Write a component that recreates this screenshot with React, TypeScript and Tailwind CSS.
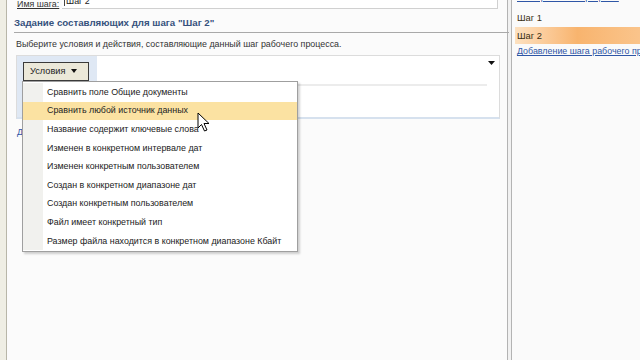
import React from 'react';

const items = [
  'Сравнить поле Общие документы',
  'Сравнить любой источник данных',
  'Название содержит ключевые слова',
  'Изменен в конкретном интервале дат',
  'Изменен конкретным пользователем',
  'Создан в конкретном диапазоне дат',
  'Создан конкретным пользователем',
  'Файл имеет конкретный тип',
  'Размер файла находится в конкретном диапазоне Кбайт',
];

function Cursor() {
  return (
    <svg width="14" height="21" viewBox="0 0 14 21" className="absolute left-[190px] top-[112px]">
      <path d="M1 1 L1 16 L4.5 12.5 L7.5 19 L10 18 L7 11.5 L12 11.5 Z" fill="#fff" stroke="#000" strokeWidth="1" strokeLinejoin="round" />
    </svg>
  );
}

function ConditionsMenu() {
  return (
    <div className="absolute left-[15px] top-[81px] w-[276px] border border-[#9f9f9f] bg-white py-px shadow-[2px_2px_2px_rgba(0,0,0,0.18)]">
      {items.map((label, i) => (
        <div
          key={label}
          className={`flex h-[18.6px] items-center whitespace-nowrap ${i === 1 ? 'bg-[#fbe2a2]' : ''}`}
        >
          <div className={`h-full w-[20px] ${i === 1 ? '' : 'bg-[#f1f1ee]'}`} />
          <span className="pl-[4px] text-[#222]">{label}</span>
        </div>
      ))}
    </div>
  );
}

export default function App() {
  return (
    <div
      className="relative flex h-[360px] w-[640px] overflow-hidden bg-[#fafafa] text-[8.9px] leading-none"
      style={{ fontFamily: '"Liberation Sans", Arial, sans-serif' }}
    >
      {/* left frame strip */}
      <div className="w-[7px] shrink-0 border-r border-[#b8b6a8] bg-[#efeee4]" />

      {/* main area */}
      <div className="relative w-[500px] shrink-0 bg-[#fbfbfb]">
        <div className="mt-[-6px] flex items-end whitespace-nowrap">
          <span className="ml-[10px] w-[45px] text-[#333] underline">Имя шага:</span>
          <div className="h-[15px] w-[436px] border-b border-r border-[#d0d0d0] bg-white pl-[2px] pt-[3px] text-[#222]">
            <span className="border-l border-[#444] pl-px">Шаг 2</span>
          </div>
        </div>

        <div className="ml-[7px] mr-[-2px] mt-[9px] border-b border-[#a9a9a9] pb-[4px] text-[9.7px] font-bold text-[#35517d]">
          Задание составляющих для шага "Шаг 2"
        </div>

        <div className="ml-[9px] mt-[7px] text-[#333]">
          Выберите условия и действия, составляющие данный шаг рабочего процесса.
        </div>

        <div className="ml-[9px] mt-[6px] flex h-[64px] w-[484px] border border-b-2 border-[#dcdcdc] border-b-[#d6e1ee]">
          <div className="w-[80px] bg-[#dfe8f4] pl-[6px] pt-[6px]">
            <div className="flex h-[19px] w-[66px] items-center gap-[6px] border border-[#3a3a3a] bg-[#ebe8d9] pl-[6px] text-[9.2px] text-[#222]">
              Условия
              <svg width="6" height="4" viewBox="0 0 6 4">
                <path d="M0 0 H6 L3 4 Z" fill="#111" />
              </svg>
            </div>
          </div>
          <div className="flex flex-1 flex-col bg-white">
            <div className="flex justify-end pr-[4px] pt-[5px]">
              <svg width="7" height="4" viewBox="0 0 7 4">
                <path d="M0 0 H7 L3.5 4 Z" fill="#111" />
              </svg>
            </div>
            <div className="ml-[8px] mr-[12px] mt-[19px] h-[2px] bg-[#ececec]" />
          </div>
        </div>

        <div className="ml-[10px] mt-[9px] text-[#2e56a6] underline">Добавить ветвь «Иначе если»</div>

        <ConditionsMenu />
        <Cursor />
      </div>

      {/* splitter */}
      <div className="w-[5px] shrink-0 border-x border-[#b3b3b3] bg-[#f1f1f1]" />

      {/* right panel */}
      <div className="min-w-0 flex-1 overflow-hidden whitespace-nowrap bg-[#fafafa]">
        <div className="ml-[5px] mt-[-7px] text-[#2e56a6] underline">Шаги рабочего процесса</div>
        <div className="ml-[5px] mt-[11px] text-[9.4px] text-[#3a2f14]">Шаг 1</div>
        <div className="ml-[3px] mt-[5px] flex h-[17px] items-center bg-gradient-to-r from-[#fde1c0] via-[#f8b46e] to-[#fac48b] pl-[2px] text-[9.4px] text-[#3a2f14]">
          Шаг 2
        </div>
        <div className="ml-[5px] mt-[3px] text-[#2e56a6] underline">
          Добавление шага рабочего процесса
        </div>
      </div>
    </div>
  );
}
